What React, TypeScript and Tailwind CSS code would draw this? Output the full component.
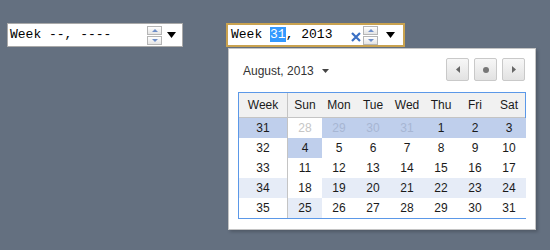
const SEL = "bg-[#bfcfec]";
const ALT = "bg-[#e6ecf7]";
const WHITE = "bg-white";

type Cell = { n: number; bg: string; text: string };
type Row = { week: number; weekBg: string; days: Cell[] };

const DARK = "text-[#1a1a1a]";
const MUTED_W = "text-[#c6c6c6]";
const MUTED_B = "text-[#a7b6d3]";

function mk(nums: number[], bgs: string[], texts: string[]): Cell[] {
  return nums.map((n, i) => ({ n, bg: bgs[i], text: texts[i] }));
}

const rows: Row[] = [
  {
    week: 31,
    weekBg: SEL,
    days: mk(
      [28, 29, 30, 31, 1, 2, 3],
      [WHITE, SEL, SEL, SEL, SEL, SEL, SEL],
      [MUTED_W, MUTED_B, MUTED_B, MUTED_B, DARK, DARK, DARK]
    ),
  },
  {
    week: 32,
    weekBg: WHITE,
    days: mk(
      [4, 5, 6, 7, 8, 9, 10],
      [SEL, WHITE, WHITE, WHITE, WHITE, WHITE, WHITE],
      Array(7).fill(DARK)
    ),
  },
  {
    week: 33,
    weekBg: WHITE,
    days: mk([11, 12, 13, 14, 15, 16, 17], Array(7).fill(WHITE), Array(7).fill(DARK)),
  },
  {
    week: 34,
    weekBg: ALT,
    days: mk(
      [18, 19, 20, 21, 22, 23, 24],
      [WHITE, ALT, ALT, ALT, ALT, ALT, ALT],
      Array(7).fill(DARK)
    ),
  },
  {
    week: 35,
    weekBg: WHITE,
    days: mk(
      [25, 26, 27, 28, 29, 30, 31],
      [ALT, WHITE, WHITE, WHITE, WHITE, WHITE, WHITE],
      Array(7).fill(DARK)
    ),
  },
];

const dayNames = ["Sun", "Mon", "Tue", "Wed", "Thu", "Fri", "Sat"];

function Spinner() {
  return (
    <div className="flex flex-col gap-px">
      <div className="w-[15px] h-[9px] border border-[#b5b5b5] bg-gradient-to-b from-white to-[#e4e4e4] flex items-center justify-center">
        <svg width="6" height="3" viewBox="0 0 6 3">
          <path d="M3 0 L6 3 L0 3Z" fill="#6f8fca" />
        </svg>
      </div>
      <div className="w-[15px] h-[9px] border border-[#b5b5b5] bg-gradient-to-b from-white to-[#e4e4e4] flex items-center justify-center">
        <svg width="6" height="3" viewBox="0 0 6 3">
          <path d="M0 0 L6 0 L3 3Z" fill="#6f8fca" />
        </svg>
      </div>
    </div>
  );
}

function DropArrow() {
  return (
    <svg width="9" height="6" viewBox="0 0 9 6">
      <path d="M0 0 L9 0 L4.5 6Z" fill="#000" />
    </svg>
  );
}

function NavButton({ children }: { children: React.ReactNode }) {
  return (
    <div className="w-[23px] h-[23px] rounded-[2px] border border-[#c9c9c9] bg-gradient-to-b from-[#f7f7f7] to-[#e2e2e2] flex items-center justify-center">
      {children}
    </div>
  );
}

export default function App() {
  return (
    <div className="w-[550px] h-[250px] bg-[#647080] font-['Liberation_Sans',Arial,sans-serif] flex items-start gap-[43px] pl-[7px] pt-[23px]">
      {/* empty week input */}
      <div className="w-[176px] h-[24px] bg-white border border-[#a9a9a9] flex items-center pl-[2px] pr-[6px]">
        <span className="font-['Liberation_Mono',monospace] text-[13px] text-black whitespace-pre flex-1">
          Week --, ----
        </span>
        <Spinner />
        <div className="ml-[5px]">
          <DropArrow />
        </div>
      </div>

      {/* focused week input with open calendar */}
      <div className="relative">
        <div className="w-[179px] h-[24px] bg-white border-2 border-[#c9a24f] flex items-center pl-[3px] pr-[8px]">
          <span className="font-['Liberation_Mono',monospace] text-[13px] text-black whitespace-pre flex-1">
            Week <span className="bg-[#3399ff] text-white">31</span>, 2013
          </span>
          <svg width="10" height="10" viewBox="0 0 10 10" className="mr-[2px] mt-[3px]">
            <path d="M1 1 L9 9 M9 1 L1 9" stroke="#3a6fc4" strokeWidth="2.2" />
          </svg>
          <Spinner />
          <div className="ml-[8px]">
            <DropArrow />
          </div>
        </div>

        <div className="absolute left-[2px] top-[25px] w-[308px] bg-white border border-[#c4c4c4] shadow-[2px_2px_3px_rgba(0,0,0,0.2)] px-[9px] pt-[9px] pb-[10px]">
          <div className="flex items-center justify-between pr-[1px] mb-[11px]">
            <div className="flex items-center gap-[8px] pl-[5px] pt-[3px] text-[12px] text-[#333]">
              <span>August, 2013</span>
              <svg width="7" height="4" viewBox="0 0 7 4">
                <path d="M0 0 L7 0 L3.5 4Z" fill="#444" />
              </svg>
            </div>
            <div className="flex gap-[5px]">
              <NavButton>
                <svg width="4" height="7" viewBox="0 0 4 7">
                  <path d="M4 0 L0 3.5 L4 7Z" fill="#666" />
                </svg>
              </NavButton>
              <NavButton>
                <div className="w-[6px] h-[6px] rounded-full bg-[#777]" />
              </NavButton>
              <NavButton>
                <svg width="4" height="7" viewBox="0 0 4 7">
                  <path d="M0 0 L4 3.5 L0 7Z" fill="#666" />
                </svg>
              </NavButton>
            </div>
          </div>

          <div className="border border-[#5b98e8] text-[12px] text-[#1a1a1a]">
            <div className="grid grid-cols-[49px_repeat(7,34px)] h-[25px] bg-[#f1f1f1] border-b border-[#c4c4c4]">
              <div className="flex items-center justify-center border-r border-[#c4c4c4]">Week</div>
              {dayNames.map((d) => (
                <div key={d} className="flex items-center justify-center">
                  {d}
                </div>
              ))}
            </div>
            {rows.map((r) => (
              <div key={r.week} className="grid grid-cols-[49px_repeat(7,34px)] h-[20px]">
                <div className={`flex items-center justify-center border-r border-[#c4c4c4] ${r.weekBg}`}>
                  {r.week}
                </div>
                {r.days.map((c, i) => (
                  <div key={i} className={`flex items-center justify-center ${c.bg} ${c.text}`}>
                    {c.n}
                  </div>
                ))}
              </div>
            ))}
          </div>
        </div>
      </div>
    </div>
  );
}
